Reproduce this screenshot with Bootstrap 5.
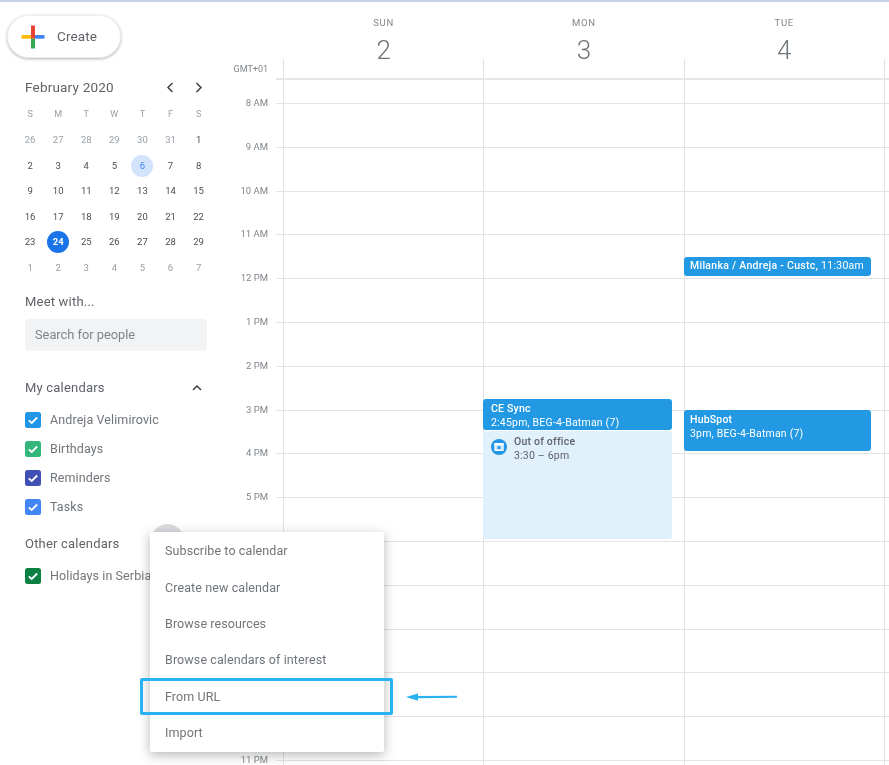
<!DOCTYPE html>
<html lang="en">
<head>
<meta charset="utf-8">
<title>Calendar</title>
<link href="https://cdn.jsdelivr.net/npm/bootstrap@5.3.0/dist/css/bootstrap.min.css" rel="stylesheet">
<style>
html,body{margin:0;height:765px;overflow:hidden;background:#fff}
body{font-family:Roboto,"Liberation Sans",sans-serif;color:#5f6368}
.topline{height:2px;background:#c7d2e6}
.shell{height:763px;position:relative;overflow:hidden;filter:blur(.35px)}
.side{width:220px;flex:none;padding-top:13px}
.create-btn{margin-left:7px;width:114px;height:43px;border-radius:22px;background:#fff;border:1px solid #eceded;box-shadow:0 1px 3px rgba(60,64,67,.4);font-size:13.5px;color:#5f6368;padding:0 0 0 13px;gap:12px;letter-spacing:.1px}
.month-head{margin:18px 0 0 25px;height:22px;font-size:13.5px;color:#5f6368;letter-spacing:.2px;width:182px}
.nav-arrows{gap:13px;margin-right:1px}
.mini{margin:4px 0 0 16px;display:grid;grid-template-columns:repeat(7,28.1px);grid-auto-rows:25.5px;font-size:9.5px;text-align:center}
.mini>span{display:flex;align-items:center;justify-content:center;color:#4a4e52}
.mini>.dow{font-size:9px;color:#9aa0a6}
.mini>.dim{color:#9aa0a6}
.mini>.dayhi{position:relative;z-index:0}
.mini>.dayhi::before{content:"";position:absolute;left:3px;top:1.6px;width:22px;height:22px;border-radius:50%;z-index:-1}
.mini>.lt{color:#4285f4}.mini>.lt::before{background:#d2e3fc}
.mini>.cur{color:#fff;font-weight:700}.mini>.cur::before{background:#1a73e8}
.sec-title{margin-left:25px;font-size:13px;color:#5f6368;letter-spacing:.2px;line-height:18px}
.meet-title{margin-top:12px}
.people{margin:8px 0 0 25px;width:182px;height:32px;padding:0 10px;border:0;border-radius:4px;background:#f1f3f4;font-size:12.8px;color:#5f6368}
.people::placeholder{color:#80868b;opacity:1}
.sec-row{width:207px;margin-top:28px}
.sec-row svg{margin-right:3px}
.cal-list{margin:9px 0 0 25px;padding:0;list-style:none}
.cal-list li{height:29px;gap:9px;font-size:12.5px;color:#70757a;letter-spacing:.1px;white-space:nowrap}
.tick-box{width:16px;height:16px;border-radius:2.5px;flex:none;display:flex;align-items:center;justify-content:center}
.c1{background:#2196e6}.c2{background:#33b679}.c3{background:#3f51b5}.c4{background:#4285f4}.c5{background:#0b8043}
.other-title{margin-top:13px}
.other-list{margin-top:9px}
.main-col{flex:1;min-width:0}
.days-head{height:57px;padding-left:63px}
.day-h{width:200.3px;text-align:center;color:#70757a;flex:none;padding-left:1px}
.day-h small{display:block;font-size:9.5px;letter-spacing:.8px;line-height:12px;padding-top:15px;color:#80868b}
.day-h b{display:block;font-weight:300;font-size:26px;line-height:28px;margin-top:7px;color:#70757a}
.grid-body{position:relative}
.hrow{display:flex;height:43.8px}
.hrow.first{height:25px}
.hrow.gmtrow{height:19px}
.hlab{width:56px;flex:none;padding-right:8px;text-align:right;font-size:9.5px;line-height:12px;color:#80868b;margin-top:-6px}
.gmtrow .hlab{margin-top:4px;font-size:9px}
.htick{width:7px;flex:none;border-top:1px solid #e3e4e6}
.hcell{width:200.3px;flex:none;border-left:1px solid #dfe1e5;border-top:1px solid #e3e4e6}
.hcell.rest{width:6px}
.gmtrow .htick,.gmtrow .hcell{border-top:0}
.first .hcell,.first .htick{border-top:2px solid #e6e7e9}
.ev{position:absolute;border-radius:3px;font-size:10.5px;line-height:14px;padding:3px 6px;color:#fff;letter-spacing:.2px;overflow:hidden;white-space:nowrap;background:#2499e3}
.ev strong{font-weight:500}
.ev-a{left:263px;top:340px;width:189px;height:31px;z-index:1;padding:3px 8px 0}
.ev-b{left:464px;top:351px;width:187px;height:41px;padding:3px 6px 0}
.ev-c{left:464px;top:198px;width:187px;height:19px;padding-top:2px;letter-spacing:.28px}
.ev-o{left:263px;top:372px;width:189px;height:108px;background:#e1f1fb;color:#5f6368;padding:4px 6px 0 8px;gap:7px}
.ev-o .ooo-ic{margin-top:4px;flex:none}
.ghost-dot{position:absolute;left:151px;top:522px;width:33px;height:33px;border-radius:50%;background:#dadce0}
.menu-pop{position:absolute;left:150px;top:530px;width:234px;height:220px;margin:0;padding:1.5px 0 0;border:0;border-radius:2px;box-shadow:0 3px 12px rgba(60,64,67,.38);display:block;z-index:3}
.menu-pop .dropdown-item{height:36.4px;padding:0 15px;display:flex;align-items:center;font-size:12.5px;color:#70757a;letter-spacing:.1px}
.hl-box{position:absolute;left:140px;top:676px;width:253px;height:37px;border:3px solid #29b2f2;border-radius:2px;z-index:4}
.hl-arrow{position:absolute;left:405px;top:689px;z-index:4}
</style>
</head>
<body>
<div class="topline"></div>
<div class="shell d-flex">
  <aside class="side">
    <button type="button" class="btn create-btn d-flex align-items-center">
      <svg width="24" height="24" viewBox="0 0 24 24"><path d="M10 .5h4V10h-4z" fill="#ea4335"/><path d="M14 10h9.500v3.700H14z" fill="#4285f4"/><path d="M.5 10H10v3.700H.5z" fill="#fbbc05"/><path d="M10 10h4v3.700h-4z" fill="#ea4335"/><path d="M10 13.700h4v9.800h-4z" fill="#34a853"/></svg>
      <span>Create</span>
    </button>
    <div class="month-head d-flex align-items-center justify-content-between">
      <span>February 2020</span>
      <span class="nav-arrows d-flex">
        <svg width="15" height="15" viewBox="0 0 15 15"><path d="M9.500 3 5 7.500 9.500 12" fill="none" stroke="#3c4043" stroke-width="1.500"/></svg>
        <svg width="15" height="15" viewBox="0 0 15 15"><path d="M5.500 3 10 7.500 5.500 12" fill="none" stroke="#3c4043" stroke-width="1.500"/></svg>
      </span>
    </div>
    <div class="mini">
      <span class="dow">S</span><span class="dow">M</span><span class="dow">T</span><span class="dow">W</span><span class="dow">T</span><span class="dow">F</span><span class="dow">S</span>
      <span class="dim">26</span><span class="dim">27</span><span class="dim">28</span><span class="dim">29</span><span class="dim">30</span><span class="dim">31</span><span>1</span>
      <span>2</span><span>3</span><span>4</span><span>5</span><span class="dayhi lt">6</span><span>7</span><span>8</span>
      <span>9</span><span>10</span><span>11</span><span>12</span><span>13</span><span>14</span><span>15</span>
      <span>16</span><span>17</span><span>18</span><span>19</span><span>20</span><span>21</span><span>22</span>
      <span>23</span><span class="dayhi cur">24</span><span>25</span><span>26</span><span>27</span><span>28</span><span>29</span>
      <span class="dim">1</span><span class="dim">2</span><span class="dim">3</span><span class="dim">4</span><span class="dim">5</span><span class="dim">6</span><span class="dim">7</span>
    </div>
    <div class="sec-title meet-title">Meet with...</div>
    <input class="form-control people" type="text" placeholder="Search for people">
    <div class="sec-row d-flex align-items-center justify-content-between">
      <span class="sec-title">My calendars</span>
      <svg width="14" height="14" viewBox="0 0 14 14"><path d="M3 9 7 5l4 4" fill="none" stroke="#3c4043" stroke-width="1.500"/></svg>
    </div>
    <ul class="cal-list">
      <li class="d-flex align-items-center"><span class="tick-box c1"><svg width="12" height="12" viewBox="0 0 12 12"><path d="M1.800 6.300 4.700 9 10.200 3.500" fill="none" stroke="#fff" stroke-width="1.800"/></svg></span>Andreja Velimirovic</li>
      <li class="d-flex align-items-center"><span class="tick-box c2"><svg width="12" height="12" viewBox="0 0 12 12"><path d="M1.800 6.300 4.700 9 10.200 3.500" fill="none" stroke="#fff" stroke-width="1.800"/></svg></span>Birthdays</li>
      <li class="d-flex align-items-center"><span class="tick-box c3"><svg width="12" height="12" viewBox="0 0 12 12"><path d="M1.800 6.300 4.700 9 10.200 3.500" fill="none" stroke="#fff" stroke-width="1.800"/></svg></span>Reminders</li>
      <li class="d-flex align-items-center"><span class="tick-box c4"><svg width="12" height="12" viewBox="0 0 12 12"><path d="M1.800 6.300 4.700 9 10.200 3.500" fill="none" stroke="#fff" stroke-width="1.800"/></svg></span>Tasks</li>
    </ul>
    <div class="sec-title other-title">Other calendars</div>
    <ul class="cal-list other-list">
      <li class="d-flex align-items-center"><span class="tick-box c5"><svg width="12" height="12" viewBox="0 0 12 12"><path d="M1.800 6.300 4.700 9 10.200 3.500" fill="none" stroke="#fff" stroke-width="1.800"/></svg></span>Holidays in Serbia</li>
    </ul>
  </aside>
  <main class="main-col">
    <div class="days-head d-flex">
      <div class="day-h"><small>SUN</small><b>2</b></div>
      <div class="day-h"><small>MON</small><b>3</b></div>
      <div class="day-h"><small>TUE</small><b>4</b></div>
    </div>
    <div class="grid-body">
      <div class="hrow gmtrow"><div class="hlab">GMT+01</div><div class="htick"></div><div class="hcell"></div><div class="hcell"></div><div class="hcell"></div><div class="hcell rest"></div></div>
      <div class="hrow first"><div class="hlab"></div><div class="htick"></div><div class="hcell"></div><div class="hcell"></div><div class="hcell"></div><div class="hcell rest"></div></div>
      <div class="hrow"><div class="hlab">8 AM</div><div class="htick"></div><div class="hcell"></div><div class="hcell"></div><div class="hcell"></div><div class="hcell rest"></div></div>
      <div class="hrow"><div class="hlab">9 AM</div><div class="htick"></div><div class="hcell"></div><div class="hcell"></div><div class="hcell"></div><div class="hcell rest"></div></div>
      <div class="hrow"><div class="hlab">10 AM</div><div class="htick"></div><div class="hcell"></div><div class="hcell"></div><div class="hcell"></div><div class="hcell rest"></div></div>
      <div class="hrow"><div class="hlab">11 AM</div><div class="htick"></div><div class="hcell"></div><div class="hcell"></div><div class="hcell"></div><div class="hcell rest"></div></div>
      <div class="hrow"><div class="hlab">12 PM</div><div class="htick"></div><div class="hcell"></div><div class="hcell"></div><div class="hcell"></div><div class="hcell rest"></div></div>
      <div class="hrow"><div class="hlab">1 PM</div><div class="htick"></div><div class="hcell"></div><div class="hcell"></div><div class="hcell"></div><div class="hcell rest"></div></div>
      <div class="hrow"><div class="hlab">2 PM</div><div class="htick"></div><div class="hcell"></div><div class="hcell"></div><div class="hcell"></div><div class="hcell rest"></div></div>
      <div class="hrow"><div class="hlab">3 PM</div><div class="htick"></div><div class="hcell"></div><div class="hcell"></div><div class="hcell"></div><div class="hcell rest"></div></div>
      <div class="hrow"><div class="hlab">4 PM</div><div class="htick"></div><div class="hcell"></div><div class="hcell"></div><div class="hcell"></div><div class="hcell rest"></div></div>
      <div class="hrow"><div class="hlab">5 PM</div><div class="htick"></div><div class="hcell"></div><div class="hcell"></div><div class="hcell"></div><div class="hcell rest"></div></div>
      <div class="hrow"><div class="hlab"></div><div class="htick"></div><div class="hcell"></div><div class="hcell"></div><div class="hcell"></div><div class="hcell rest"></div></div>
      <div class="hrow"><div class="hlab"></div><div class="htick"></div><div class="hcell"></div><div class="hcell"></div><div class="hcell"></div><div class="hcell rest"></div></div>
      <div class="hrow"><div class="hlab"></div><div class="htick"></div><div class="hcell"></div><div class="hcell"></div><div class="hcell"></div><div class="hcell rest"></div></div>
      <div class="hrow"><div class="hlab"></div><div class="htick"></div><div class="hcell"></div><div class="hcell"></div><div class="hcell"></div><div class="hcell rest"></div></div>
      <div class="hrow"><div class="hlab"></div><div class="htick"></div><div class="hcell"></div><div class="hcell"></div><div class="hcell"></div><div class="hcell rest"></div></div>
      <div class="hrow"><div class="hlab">11 PM</div><div class="htick"></div><div class="hcell"></div><div class="hcell"></div><div class="hcell"></div><div class="hcell rest"></div></div>
      <div class="ev ev-c"><strong>Milanka / Andreja - Custc,</strong> 11:30am</div>
      <div class="ev ev-a"><strong>CE Sync</strong><br>2:45pm, BEG-4-Batman (7)</div>
      <div class="ev ev-o d-flex">
        <svg class="ooo-ic" width="16" height="16" viewBox="0 0 16 16"><circle cx="8" cy="8" r="8" fill="#2196e6"/><rect x="3.500" y="4" width="9" height="8" rx="1" fill="#cfe9fa"/><rect x="3.500" y="4" width="9" height="1.800" fill="#fff"/><rect x="3.900" y="4.400" width="8.200" height="7.200" fill="none" stroke="#fff" stroke-width=".8"/><rect x="6.500" y="7.200" width="3" height="2.800" fill="#2196e6"/></svg>
        <div><strong>Out of office</strong><br>3:30 – 6pm</div>
      </div>
      <div class="ev ev-b"><strong>HubSpot</strong><br>3pm, BEG-4-Batman (7)</div>
    </div>
  </main>
  <div class="ghost-dot"></div>
  <div class="dropdown-menu show menu-pop">
    <a class="dropdown-item" href="#">Subscribe to calendar</a>
    <a class="dropdown-item" href="#">Create new calendar</a>
    <a class="dropdown-item" href="#">Browse resources</a>
    <a class="dropdown-item" href="#">Browse calendars of interest</a>
    <a class="dropdown-item" href="#">From URL</a>
    <a class="dropdown-item" href="#">Import</a>
  </div>
  <div class="hl-box"></div>
  <svg class="hl-arrow" width="53" height="12" viewBox="0 0 53 12"><path d="M1 6 13 2.500v2.500L52 4.800v2L13 7.200v2.500z" fill="#29b2f2"/></svg>
</div>
<script src="https://cdn.jsdelivr.net/npm/bootstrap@5.3.0/dist/js/bootstrap.bundle.min.js"></script>
</body>
</html>
